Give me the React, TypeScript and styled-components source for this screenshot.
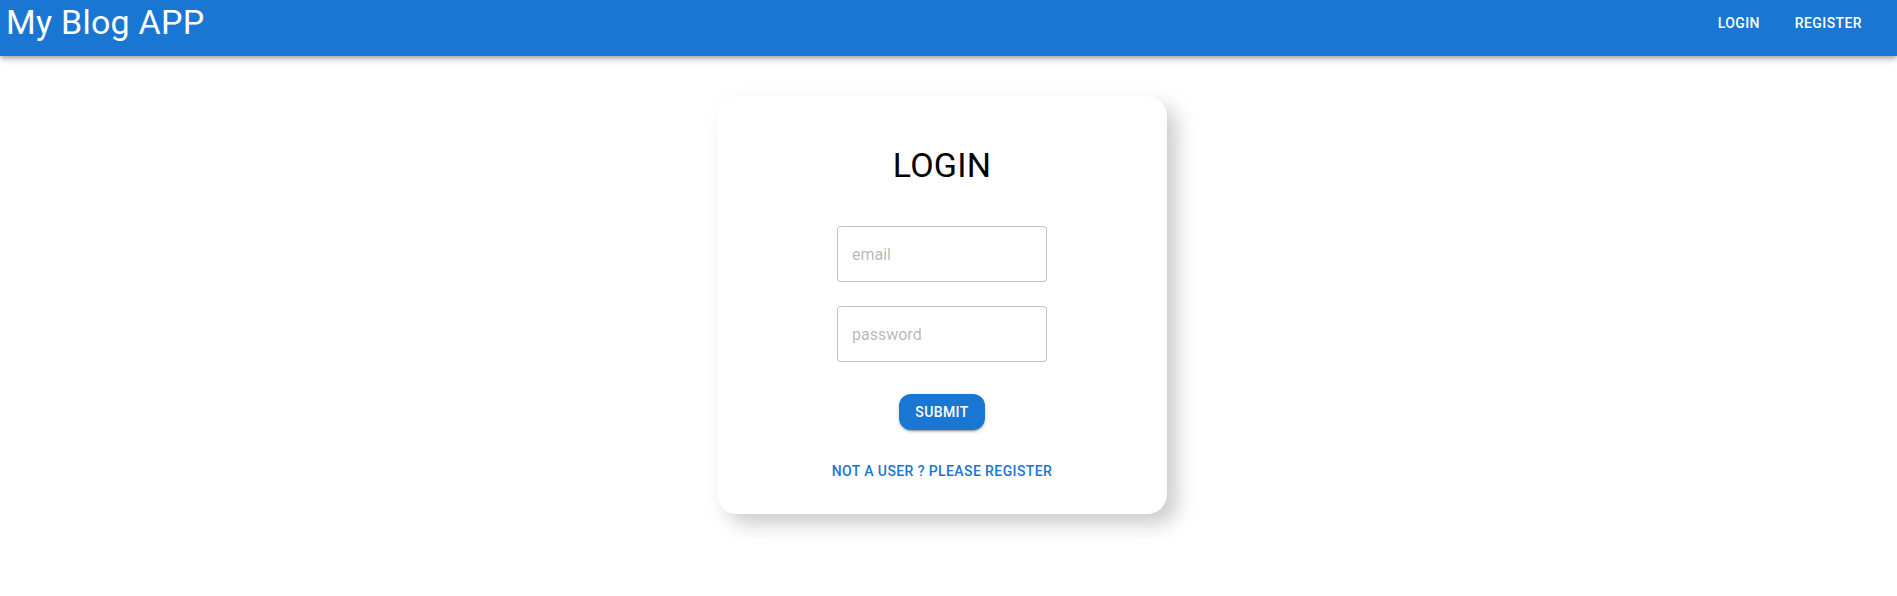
import React from "react";
import styled, { createGlobalStyle } from "styled-components";

const GlobalStyle = createGlobalStyle`
  html, body {
    margin: 0;
    padding: 0;
    background: #ffffff;
    font-family: Roboto, "Helvetica Neue", Arial, sans-serif;
  }
  * { box-sizing: border-box; }
`;

const AppBar = styled.header`
  display: flex;
  align-items: flex-start;
  height: 56px;
  padding: 0 27px 0 6px;
  background: #1976d2;
  color: #fff;
  box-shadow: 0px 2px 4px -1px rgba(0, 0, 0, 0.2),
    0px 4px 5px 0px rgba(0, 0, 0, 0.14), 0px 1px 10px 0px rgba(0, 0, 0, 0.12);
`;

const Title = styled.h1`
  margin: 1px 0 0 0;
  font-size: 34px;
  line-height: 42px;
  font-weight: 400;
  letter-spacing: 0.25px;
`;

const Nav = styled.nav`
  display: flex;
  gap: 19px;
  margin-left: auto;
  margin-top: 5px;
`;

const TextButton = styled.button<{ $color: string; $weight?: number }>`
  border: none;
  background: transparent;
  padding: 6px 8px;
  font-family: Roboto, "Helvetica Neue", Arial, sans-serif;
  font-size: 14px;
  line-height: 24px;
  font-weight: ${(p) => p.$weight ?? 500};
  letter-spacing: 0.4px;
  text-transform: uppercase;
  color: ${(p) => p.$color};
  border-radius: 4px;
  cursor: pointer;
`;

const Main = styled.main`
  display: flex;
  justify-content: center;
  align-items: flex-start;
  min-height: 540px;
  padding: 40px 13px 0 0;
`;

const Card = styled.form`
  width: 450px;
  display: flex;
  flex-direction: column;
  align-items: center;
  padding: 48px 0 25px;
  background: #fff;
  border-radius: 20px;
  box-shadow: 10px 10px 20px #cccccc;
`;

const Heading = styled.h2`
  margin: 0 0 40px;
  font-size: 34px;
  line-height: 42px;
  font-weight: 400;
  letter-spacing: 0.25px;
  color: #000;
`;

const Field = styled.input<{ $gap?: number }>`
  width: 210px;
  height: 56px;
  margin-bottom: ${(p) => p.$gap ?? 0}px;
  padding: 0 14px;
  border: 1px solid rgba(0, 0, 0, 0.23);
  border-radius: 4px;
  font-family: Roboto, "Helvetica Neue", Arial, sans-serif;
  font-size: 16px;
  color: rgba(0, 0, 0, 0.87);
  outline: none;
  &::placeholder {
    color: rgba(0, 0, 0, 0.3);
  }
`;

const SubmitButton = styled.button`
  margin: 32px 0 23px;
  padding: 6px 16px;
  border: none;
  border-radius: 12px;
  background: #1976d2;
  color: #fff;
  font-family: Roboto, "Helvetica Neue", Arial, sans-serif;
  font-size: 14px;
  line-height: 24px;
  font-weight: 500;
  letter-spacing: 0.4px;
  text-transform: uppercase;
  box-shadow: 0px 3px 1px -2px rgba(0, 0, 0, 0.2),
    0px 2px 2px 0px rgba(0, 0, 0, 0.14), 0px 1px 5px 0px rgba(0, 0, 0, 0.12);
  cursor: pointer;
`;

export default function App() {
  return (
    <>
      <GlobalStyle />
      <AppBar>
        <Title>My Blog APP</Title>
        <Nav>
          <TextButton $color="#ffffff">Login</TextButton>
          <TextButton $color="#ffffff">Register</TextButton>
        </Nav>
      </AppBar>
      <Main>
        <Card onSubmit={(e) => e.preventDefault()}>
          <Heading>LOGIN</Heading>
          <Field type="email" placeholder="email" $gap={24} />
          <Field type="password" placeholder="password" />
          <SubmitButton type="submit">Submit</SubmitButton>
          <TextButton type="button" $color="#1976d2">
            Not a user ? Please Register
          </TextButton>
        </Card>
      </Main>
    </>
  );
}
